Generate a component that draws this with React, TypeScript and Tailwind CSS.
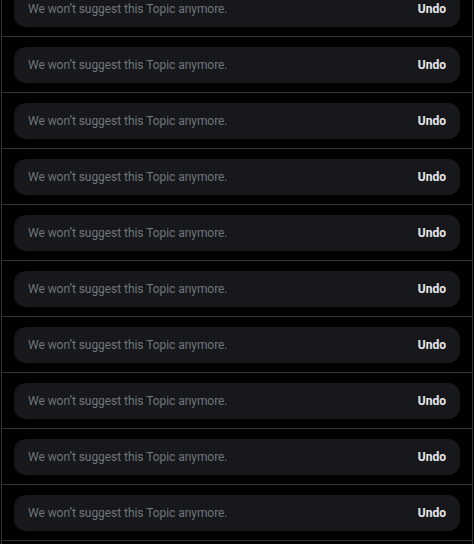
const rows = Array.from({ length: 10 }, (_, i) => i);

function DismissedTopic() {
  return (
    <div className="border-t border-[#2f3336] px-[12px] pt-[10px] pb-[9px]">
      <div className="flex h-[36px] items-center justify-between rounded-[12px] bg-[#16181c] px-[14px]">
        <span className="text-[12px] tracking-[-0.05px] text-[#71767b]">We won’t suggest this Topic anymore.</span>
        <button className="text-[12px] font-bold text-[#e7e9ea]">Undo</button>
      </div>
    </div>
  );
}

export default function App() {
  return (
    <div
      className="h-[544px] w-[474px] overflow-hidden bg-black"
      style={{ fontFamily: 'Roboto, "Liberation Sans", Arial, sans-serif' }}
    >
      <div className="-mt-[20px] mx-px h-[564px] border-x border-[#2f3336]">
        {rows.map((i) => (
          <DismissedTopic key={i} />
        ))}
        <div className="border-t border-[#2f3336]" />
      </div>
    </div>
  );
}
